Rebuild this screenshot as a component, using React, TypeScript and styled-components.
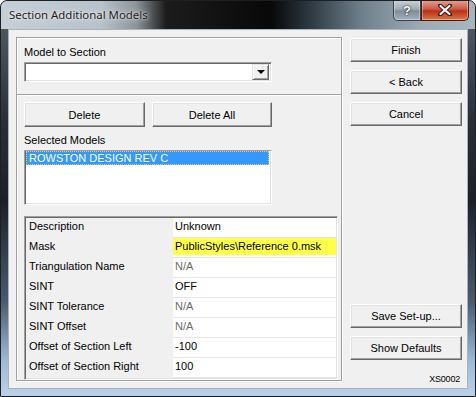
import React from 'react';
import styled, { createGlobalStyle } from 'styled-components';

const GlobalStyle = createGlobalStyle`
  html, body {
    margin: 0;
    padding: 0;
    background: #ffffff;
  }
  body {
    font-family: 'Liberation Sans', Arial, sans-serif;
    font-size: 11px;
    color: #000;
  }
`;

const Window = styled.div`
  box-sizing: border-box;
  width: 476px;
  height: 397px;
  display: flex;
  flex-direction: column;
  border: 1px solid #1c1f24;
  border-radius: 7px 7px 0 0;
  overflow: hidden;
  background: linear-gradient(
    to bottom,
    #59626b 0px,
    #2a2f36 120px,
    #1d2127 200px,
    #4a5a6c 300px,
    #9fbad6 360px,
    #bcd2ea 397px
  );
`;

const TitleBar = styled.div`
  height: 28px;
  flex-shrink: 0;
  display: flex;
  align-items: flex-start;
  background: linear-gradient(
    to right,
    #c6cfd6 0px,
    #b8c2ca 100px,
    #8d959b 135px,
    #1c1c1c 165px,
    #080808 270px,
    #2e3a42 310px,
    #6e7f8b 360px,
    #9eabb5 420px,
    #a9b5be 476px
  );
`;

const Title = styled.div`
  padding: 6px 0 0 8px;
  font-family: 'Noto Sans', 'Liberation Sans', sans-serif;
  font-size: 11.4px;
  line-height: 15px;
  color: #1a1a1a;
  text-shadow: 0 0 6px rgba(255, 255, 255, 0.9), 0 0 2px rgba(255, 255, 255, 0.8);
`;

const CaptionButtons = styled.div`
  margin-left: auto;
  margin-right: 6px;
  margin-top: -1px;
  display: flex;
`;

const CaptionButton = styled.div<{ $close?: boolean }>`
  box-sizing: border-box;
  width: ${(p) => (p.$close ? 48 : 28)}px;
  height: 21px;
  display: flex;
  align-items: center;
  justify-content: center;
  border: 1px solid ${(p) => (p.$close ? '#4a1a14' : '#3b4248')};
  border-top: none;
  border-radius: ${(p) => (p.$close ? '0 0 5px 0' : '0 0 0 5px')};
  background: ${(p) =>
    p.$close
      ? 'linear-gradient(#e3a596, #cc5a44 45%, #b8311b 55%, #d8783f)'
      : 'linear-gradient(#ccd4da, #a0abb4 45%, #808c96 55%, #a6b2bb)'};
  box-shadow: inset 0 0 0 1px rgba(255, 255, 255, 0.35);
  color: #fff;
  font: bold 13px 'Liberation Sans', Arial, sans-serif;
  text-shadow: 0 0 2px #2a2a2a, 0 0 1px #000;
`;

const Frame = styled.div`
  flex: 1;
  display: flex;
  padding: 0 7px 7px 7px;
  min-height: 0;
`;

const Client = styled.div`
  flex: 1;
  display: flex;
  gap: 8px;
  border: 1px solid #a6b4c2;
  background: #f0f0f0;
  padding: 7px 5px 7px 7px;
`;

const LeftPanel = styled.div`
  box-sizing: border-box;
  width: 326px;
  display: flex;
  flex-direction: column;
  border: 1px solid #a0a0a0;
  box-shadow: inset 1px 1px 0 #fff, 1px 1px 0 #fff;
`;

const TopSection = styled.div`
  box-sizing: border-box;
  height: 57px;
  padding: 8px 0 0 7px;
  border-bottom: 1px solid #a0a0a0;
  box-shadow: 0 1px 0 #fff;
`;

const BottomSection = styled.div`
  flex: 1;
  padding: 7px 0 0 7px;
  display: flex;
  flex-direction: column;
`;

const Label = styled.div<{ $gap?: number }>`
  line-height: 13px;
  height: 13px;
  margin-top: ${(p) => p.$gap ?? 0}px;
`;

const Combo = styled.div`
  box-sizing: border-box;
  width: 248px;
  height: 20px;
  margin-top: 3px;
  display: flex;
  justify-content: flex-end;
  background: #fff;
  border: 1px solid;
  border-color: #a0a0a0 #fff #fff #a0a0a0;
  box-shadow: inset 1px 1px 0 #696969, inset -1px -1px 0 #e3e3e3;
  padding: 1px 2px 2px 0;
`;

const ComboButton = styled.div`
  box-sizing: border-box;
  width: 17px;
  height: 16px;
  display: flex;
  align-items: center;
  justify-content: center;
  background: #f0f0f0;
  border: 1px solid;
  border-color: #e3e3e3 #696969 #696969 #e3e3e3;
  box-shadow: inset 1px 1px 0 #fff, inset -1px -1px 0 #a0a0a0;
`;

const Arrow = styled.div`
  width: 0;
  height: 0;
  border-left: 4px solid transparent;
  border-right: 4px solid transparent;
  border-top: 4px solid #000;
`;

const ButtonRow = styled.div`
  display: flex;
  gap: 7px;
`;

const Button = styled.button<{ $w?: number; $h?: number }>`
  box-sizing: border-box;
  width: ${(p) => (p.$w ? `${p.$w}px` : '100%')};
  height: ${(p) => p.$h ?? 24}px;
  padding: 0;
  font: 11px 'Liberation Sans', Arial, sans-serif;
  color: #000;
  background: #f0f0f0;
  border: 1px solid;
  border-color: #fff #696969 #696969 #fff;
  box-shadow: inset -1px -1px 0 #a0a0a0, inset 1px 1px 0 #e3e3e3;
  flex-shrink: 0;
`;

const ListBox = styled.div`
  box-sizing: border-box;
  width: 248px;
  height: 55px;
  margin-top: 3px;
  background: #fff;
  border: 1px solid;
  border-color: #a0a0a0 #fff #fff #a0a0a0;
  box-shadow: inset 1px 0 0 #696969, inset -1px -1px 0 #e3e3e3;
  padding: 0 2px 0 1px;
`;

const ListItem = styled.div<{ $selected?: boolean }>`
  box-sizing: border-box;
  height: 14px;
  line-height: 12px;
  padding-left: 2px;
  color: ${(p) => (p.$selected ? '#fff' : '#000')};
  background: ${(p) => (p.$selected ? '#3399ff' : 'transparent')};
  border: 1px dotted ${(p) => (p.$selected ? '#f2c27c' : 'transparent')};
  white-space: nowrap;
`;

const Grid = styled.div`
  box-sizing: border-box;
  width: 314px;
  margin-top: 11px;
  border: 1px solid;
  border-color: #a0a0a0 #fff #fff #a0a0a0;
  box-shadow: inset 1px 1px 0 #696969, inset -1px -1px 0 #e3e3e3;
  padding: 1px 1px 1px 1px;
  display: grid;
  grid-template-columns: 147px 1fr;
`;

const NameCell = styled.div`
  height: 20px;
  line-height: 17px;
  padding-left: 3px;
  background: #f0f0f0;
  white-space: nowrap;
`;

const ValueCell = styled.div`
  box-sizing: border-box;
  height: 20px;
  padding-bottom: 2px;
  border-bottom: 1px solid #e6e6e6;
  background: #fff;
`;

const ValueText = styled.div<{ $muted?: boolean; $highlight?: boolean }>`
  height: 17px;
  line-height: 17px;
  padding-left: 2px;
  white-space: nowrap;
  color: ${(p) => (p.$muted ? '#6d6d6d' : '#000')};
  background: ${(p) => (p.$highlight ? '#ffff4a' : 'transparent')};
`;

const RightColumn = styled.div`
  width: 112px;
  display: flex;
  flex-direction: column;
  gap: 8px;
  padding-top: 1px;
`;

const Spacer = styled.div`
  flex: 1;
`;

const Code = styled.div`
  margin-top: 6px;
  margin-bottom: -3px;
  text-align: right;
  padding-right: 2px;
  font: 9px 'Liberation Sans', Arial, sans-serif;
  line-height: 10px;
  letter-spacing: -0.2px;
`;

type Property = {
  name: string;
  value: string;
  muted?: boolean;
  highlight?: boolean;
};

const properties: Property[] = [
  { name: 'Description', value: 'Unknown' },
  { name: 'Mask', value: 'PublicStyles\\Reference 0.msk', highlight: true },
  { name: 'Triangulation Name', value: 'N/A', muted: true },
  { name: 'SINT', value: 'OFF' },
  { name: 'SINT Tolerance', value: 'N/A', muted: true },
  { name: 'SINT Offset', value: 'N/A', muted: true },
  { name: 'Offset of Section Left', value: '-100' },
  { name: 'Offset of Section Right', value: '100' },
];

function CloseGlyph() {
  return (
    <svg width="14" height="12" viewBox="0 0 14 12">
      <path
        d="M2 1.5 L12 10.5 M12 1.5 L2 10.5"
        stroke="#3a1510"
        strokeWidth="4"
        strokeLinecap="round"
      />
      <path
        d="M2.5 2 L11.5 10 M11.5 2 L2.5 10"
        stroke="#fff"
        strokeWidth="2.2"
        strokeLinecap="round"
      />
    </svg>
  );
}

export default function App() {
  return (
    <>
      <GlobalStyle />
      <Window>
        <TitleBar>
          <Title>Section Additional Models</Title>
          <CaptionButtons>
            <CaptionButton>?</CaptionButton>
            <CaptionButton $close>
              <CloseGlyph />
            </CaptionButton>
          </CaptionButtons>
        </TitleBar>
        <Frame>
          <Client>
            <LeftPanel>
              <TopSection>
                <Label>Model to Section</Label>
                <Combo>
                  <ComboButton>
                    <Arrow />
                  </ComboButton>
                </Combo>
              </TopSection>
              <BottomSection>
                <ButtonRow>
                  <Button $w={121} $h={25}>
                    Delete
                  </Button>
                  <Button $w={120} $h={25}>
                    Delete All
                  </Button>
                </ButtonRow>
                <Label $gap={7}>Selected Models</Label>
                <ListBox>
                  <ListItem $selected>ROWSTON DESIGN REV C</ListItem>
                </ListBox>
                <Grid>
                  {properties.map((prop) => (
                    <React.Fragment key={prop.name}>
                      <NameCell>{prop.name}</NameCell>
                      <ValueCell>
                        <ValueText $muted={prop.muted} $highlight={prop.highlight}>
                          {prop.value}
                        </ValueText>
                      </ValueCell>
                    </React.Fragment>
                  ))}
                </Grid>
              </BottomSection>
            </LeftPanel>
            <RightColumn>
              <Button>Finish</Button>
              <Button>&lt; Back</Button>
              <Button>Cancel</Button>
              <Spacer />
              <Button>Save Set-up...</Button>
              <Button>Show Defaults</Button>
              <Code>XS0002</Code>
            </RightColumn>
          </Client>
        </Frame>
      </Window>
    </>
  );
}
